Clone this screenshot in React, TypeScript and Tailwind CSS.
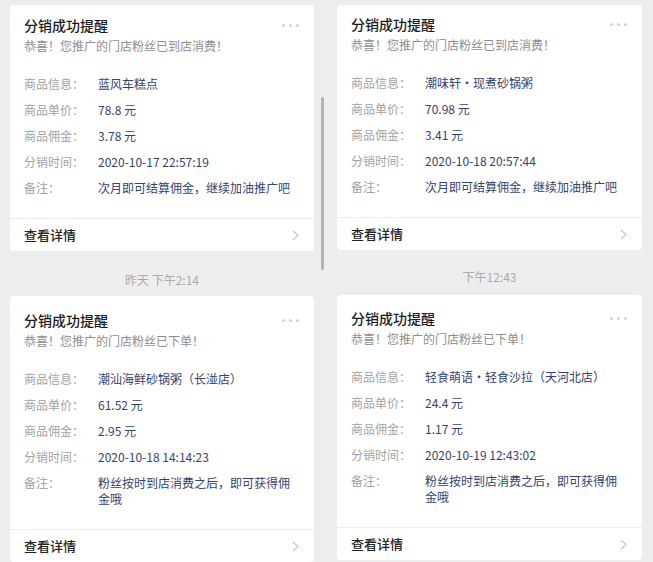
const cards = [
  {
    sub: "恭喜！您推广的门店粉丝已到店消费！",
    name: "蓝风车糕点",
    price: "78.8 元",
    fee: "3.78 元",
    time: "2020-10-17 22:57:19",
    note: "次月即可结算佣金，继续加油推广吧",
  },
  {
    sub: "恭喜！您推广的门店粉丝已到店消费！",
    name: "潮味轩·现煮砂锅粥",
    price: "70.98 元",
    fee: "3.41 元",
    time: "2020-10-18 20:57:44",
    note: "次月即可结算佣金，继续加油推广吧",
  },
  {
    sub: "恭喜！您推广的门店粉丝已下单！",
    name: "潮汕海鲜砂锅粥（长湴店）",
    price: "61.52 元",
    fee: "2.95 元",
    time: "2020-10-18 14:14:23",
    note: "粉丝按时到店消费之后，即可获得佣金哦",
  },
  {
    sub: "恭喜！您推广的门店粉丝已下单！",
    name: "轻食萌语·轻食沙拉（天河北店）",
    price: "24.4 元",
    fee: "1.17 元",
    time: "2020-10-19 12:43:02",
    note: "粉丝按时到店消费之后，即可获得佣金哦",
  },
];

type Card = (typeof cards)[number];

function NoticeCard({ card, top }: { card: Card; top: string }) {
  const rows = [
    ["商品信息：", card.name],
    ["商品单价：", card.price],
    ["商品佣金：", card.fee],
    ["分销时间：", card.time],
    ["备注：", card.note],
  ];
  return (
    <div className="rounded-[4px] bg-white">
      <div className={`pl-[14px] pr-[14px] pb-[22px] ${top}`}>
        <div className="flex items-center justify-between">
          <p className="text-[14px] leading-[20px] font-medium text-[#1b1b1b]">分销成功提醒</p>
          <div className="flex gap-[4px] pr-[1px]">
            <span className="h-[3px] w-[3px] rounded-full bg-[#d2d2d2]" />
            <span className="h-[3px] w-[3px] rounded-full bg-[#d2d2d2]" />
            <span className="h-[3px] w-[3px] rounded-full bg-[#d2d2d2]" />
          </div>
        </div>
        <p className="mt-[2px] text-[12px] leading-[18px] text-[#8e8e8e]">{card.sub}</p>
        <div className="mt-[21px] flex flex-col gap-[10px]">
          {rows.map(([label, value]) => (
            <div key={label} className="flex text-[12px] leading-[16px]">
              <span className="w-[74px] shrink-0 text-[#a2a2a2]">{label}</span>
              <span className="w-[196px] text-[#34426f]">{value}</span>
            </div>
          ))}
        </div>
      </div>
      <div className="flex h-[33px] items-center justify-between border-t border-[#ececec] pl-[14px] pr-[15px]">
        <p className="text-[13px] font-medium text-[#222222]">查看详情</p>
        <svg width="7" height="11" viewBox="0 0 7 11" fill="none">
          <polyline points="1,1 6,5.5 1,10" stroke="#c6c6c6" strokeWidth="1.2" />
        </svg>
      </div>
    </div>
  );
}

export default function App() {
  return (
    <main
      className="relative flex h-[562px] w-[653px] gap-[23px] overflow-hidden bg-[#ededed] pl-[10px] pt-[5px]"
      style={{ fontFamily: '"Noto Sans CJK SC", "Noto Sans", sans-serif' }}
    >
      <div className="flex w-[304px] flex-col">
        <NoticeCard card={cards[0]} top="pt-[10px]" />
        <div className="h-[46px] pt-[21px] text-center text-[12px] leading-[16px] text-[#ababab]">昨天 下午2:14</div>
        <NoticeCard card={cards[2]} top="pt-[14px]" />
      </div>
      <div className="flex w-[305px] flex-col">
        <NoticeCard card={cards[1]} top="pt-[9px]" />
        <div className="h-[45px] pt-[19px] text-center text-[12px] leading-[16px] text-[#ababab]">下午12:43</div>
        <NoticeCard card={cards[3]} top="pt-[13px]" />
      </div>
      <div className="absolute left-[321px] top-[97px] h-[173px] w-[3px] rounded-full bg-[#b3b3b3]" />
    </main>
  );
}
